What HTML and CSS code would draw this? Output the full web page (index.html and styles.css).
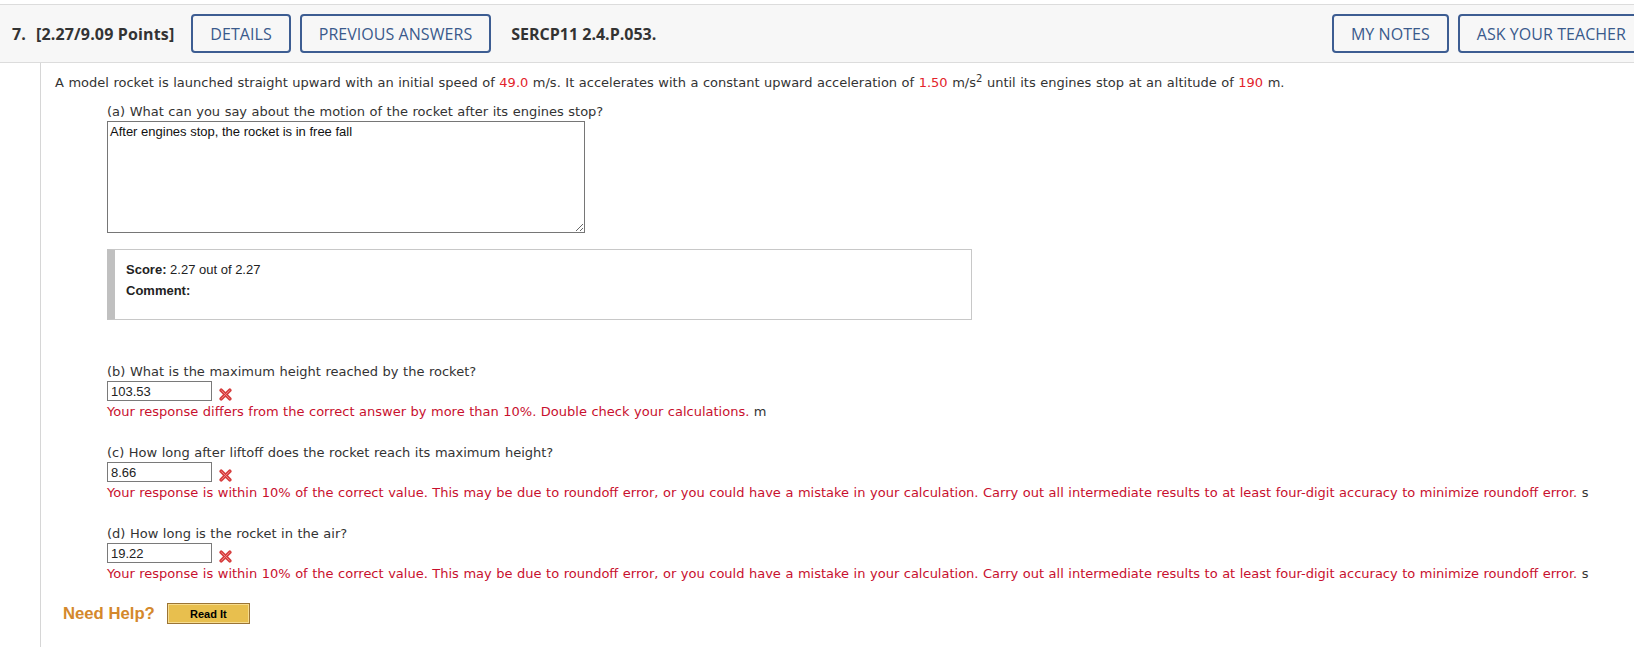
FILE: index.html
```html
<!DOCTYPE html>
<html>
<head>
<meta charset="utf-8">
<title>Question 7</title>
<link rel="stylesheet" href="styles.css">
</head>
<body>
<div class="question">
  <div class="q-header">
    <div class="q-title"><span class="q-num">7.</span><span class="q-points">[2.27/9.09 Points]</span></div>
    <button class="hbtn hbtn-first">DETAILS</button>
    <button class="hbtn">PREVIOUS ANSWERS</button>
    <span class="q-code">SERCP11 2.4.P.053.</span>
    <div class="hright">
      <button class="hbtn">MY NOTES</button>
      <button class="hbtn">ASK YOUR TEACHER</button>
    </div>
  </div>
  <div class="q-body">
    <p class="intro">A model rocket is launched straight upward with an initial speed of <span class="val">49.0</span> m/s. It accelerates with a constant upward acceleration of <span class="val">1.50</span> m/s<sup>2</sup> until its engines stop at an altitude of <span class="val">190</span> m.</p>
    <div class="parts">
      <div class="part-a">
        <div class="prompt">(a) What can you say about the motion of the rocket after its engines stop?</div>
        <textarea class="essay">After engines stop, the rocket is in free fall</textarea>
        <div class="score-box">
          <div><b>Score:</b> 2.27 out of 2.27</div>
          <div><b>Comment:</b></div>
        </div>
      </div>
      <div class="part part-b">
        <div class="prompt">(b) What is the maximum height reached by the rocket?</div>
        <div class="answer">
          <input class="ans" type="text" value="103.53" readonly>
          <svg class="xmark" width="13" height="13" viewBox="0 0 13 13"><path d="M2.2 2.2 L10.8 10.8 M10.8 2.2 L2.2 10.8" stroke="#d63e3e" stroke-width="3.6" stroke-linecap="round"/><path d="M2.6 2.6 L10.4 10.4 M10.4 2.6 L2.6 10.4" stroke="#ee8080" stroke-width="1" stroke-linecap="round"/></svg>
        </div>
        <div class="err">Your response differs from the correct answer by more than 10%. Double check your calculations. <span class="unit">m</span></div>
      </div>
      <div class="part">
        <div class="prompt">(c) How long after liftoff does the rocket reach its maximum height?</div>
        <div class="answer">
          <input class="ans" type="text" value="8.66" readonly>
          <svg class="xmark" width="13" height="13" viewBox="0 0 13 13"><path d="M2.2 2.2 L10.8 10.8 M10.8 2.2 L2.2 10.8" stroke="#d63e3e" stroke-width="3.6" stroke-linecap="round"/><path d="M2.6 2.6 L10.4 10.4 M10.4 2.6 L2.6 10.4" stroke="#ee8080" stroke-width="1" stroke-linecap="round"/></svg>
        </div>
        <div class="err">Your response is within 10% of the correct value. This may be due to roundoff error, or you could have a mistake in your calculation. Carry out all intermediate results to at least four-digit accuracy to minimize roundoff error. <span class="unit">s</span></div>
      </div>
      <div class="part">
        <div class="prompt">(d) How long is the rocket in the air?</div>
        <div class="answer">
          <input class="ans" type="text" value="19.22" readonly>
          <svg class="xmark" width="13" height="13" viewBox="0 0 13 13"><path d="M2.2 2.2 L10.8 10.8 M10.8 2.2 L2.2 10.8" stroke="#d63e3e" stroke-width="3.6" stroke-linecap="round"/><path d="M2.6 2.6 L10.4 10.4 M10.4 2.6 L2.6 10.4" stroke="#ee8080" stroke-width="1" stroke-linecap="round"/></svg>
        </div>
        <div class="err">Your response is within 10% of the correct value. This may be due to roundoff error, or you could have a mistake in your calculation. Carry out all intermediate results to at least four-digit accuracy to minimize roundoff error. <span class="unit">s</span></div>
      </div>
    </div>
    <div class="help">
      <span class="help-label">Need Help?</span>
      <button class="read-btn">Read It</button>
    </div>
  </div>
</div>
</body>
</html>
```

FILE: styles.css
```css
html, body {
  margin: 0;
  padding: 0;
  background: #ffffff;
}

body {
  overflow-x: hidden;
}

.question {
  width: 1645px;
  padding-top: 4px;
}

.q-header {
  display: flex;
  align-items: center;
  height: 57px;
  background: #f7f7f7;
  border-top: 1px solid #dcdcdc;
  border-bottom: 1px solid #dcdcdc;
  padding-left: 12px;
  font-family: "Open Sans", "Liberation Sans", sans-serif;
  font-size: 16px;
  color: #333333;
}

.q-title {
  font-weight: 700;
  white-space: nowrap;
  letter-spacing: 0.15px;
}

.q-points {
  margin-left: 10px;
}

.hbtn {
  height: 39px;
  box-sizing: border-box;
  border: 2px solid #3d5d92;
  border-radius: 4px;
  background: transparent;
  padding: 0 17px;
  margin-left: 9px;
  font-family: "Open Sans", "Liberation Sans", sans-serif;
  font-size: 16px;
  letter-spacing: 0.05px;
  color: #3a5a8c;
  white-space: nowrap;
}

.hbtn-first {
  margin-left: 17px;
}

.q-code {
  margin-left: 20px;
  font-weight: 700;
  white-space: nowrap;
}

.hright {
  margin-left: auto;
  display: flex;
}

.q-body {
  margin-left: 40px;
  border-left: 1px solid #d6d6d6;
  padding: 12px 0 30px 14px;
  min-height: calc(100vh - 63px);
  box-sizing: border-box;
  font-family: Verdana, "DejaVu Sans", sans-serif;
  font-size: 13px;
  line-height: 16px;
  word-spacing: 0.4px;
  color: #333333;
}

.intro {
  margin: 0;
  white-space: nowrap;
}

.val {
  color: #e3232b;
}

sup {
  font-size: 10px;
  line-height: 0;
}

.parts {
  padding-left: 52px;
  margin-top: 13px;
}

.prompt {
  line-height: 16px;
}

.essay {
  display: block;
  margin: 1px 0 0 0;
  width: 478px;
  height: 112px;
  box-sizing: border-box;
  border: 1px solid #767676;
  padding: 2px;
  font-family: "Liberation Sans", Arial, sans-serif;
  font-size: 13px;
  word-spacing: 0;
  color: #111111;
  background: #ffffff;
}

.score-box {
  margin-top: 16px;
  width: 865px;
  height: 71px;
  box-sizing: border-box;
  border: 1px solid #c8c8c8;
  border-left: 8px solid #c0c0c0;
  padding: 9px 11px;
  font-family: "Liberation Sans", Arial, sans-serif;
  font-size: 13px;
  line-height: 21px;
  word-spacing: 0;
  color: #222222;
}

.part {
  margin-top: 25px;
}

.part-b {
  margin-top: 44px;
}

.answer {
  display: flex;
  align-items: flex-end;
  margin-top: 1px;
  height: 20px;
}

.ans {
  width: 105px;
  height: 20px;
  box-sizing: border-box;
  border: 1px solid #7a7a7a;
  padding: 0 3px;
  margin: 0;
  font-family: "Liberation Sans", Arial, sans-serif;
  font-size: 13px;
  color: #222222;
  background: #ffffff;
}

.xmark {
  display: block;
  margin-left: 7px;
}

.err {
  margin-top: 3px;
  color: #c8102e;
  white-space: nowrap;
}

.unit {
  color: #333333;
}

.help {
  display: flex;
  align-items: center;
  height: 21px;
  margin-top: 21px;
  padding-left: 8px;
  word-spacing: 0;
}

.help-label {
  font-family: "Liberation Sans", Arial, sans-serif;
  font-size: 16.7px;
  font-weight: 700;
  color: #d4882c;
}

.read-btn {
  margin-left: 12px;
  width: 83px;
  height: 21px;
  box-sizing: border-box;
  border: 1px solid #9b7435;
  box-shadow: inset 0 0 0 1px #f6dc8e;
  background: #e8bf4e;
  padding: 0;
  font-family: "Liberation Sans", Arial, sans-serif;
  font-size: 11px;
  font-weight: 700;
  color: #000000;
}
```
